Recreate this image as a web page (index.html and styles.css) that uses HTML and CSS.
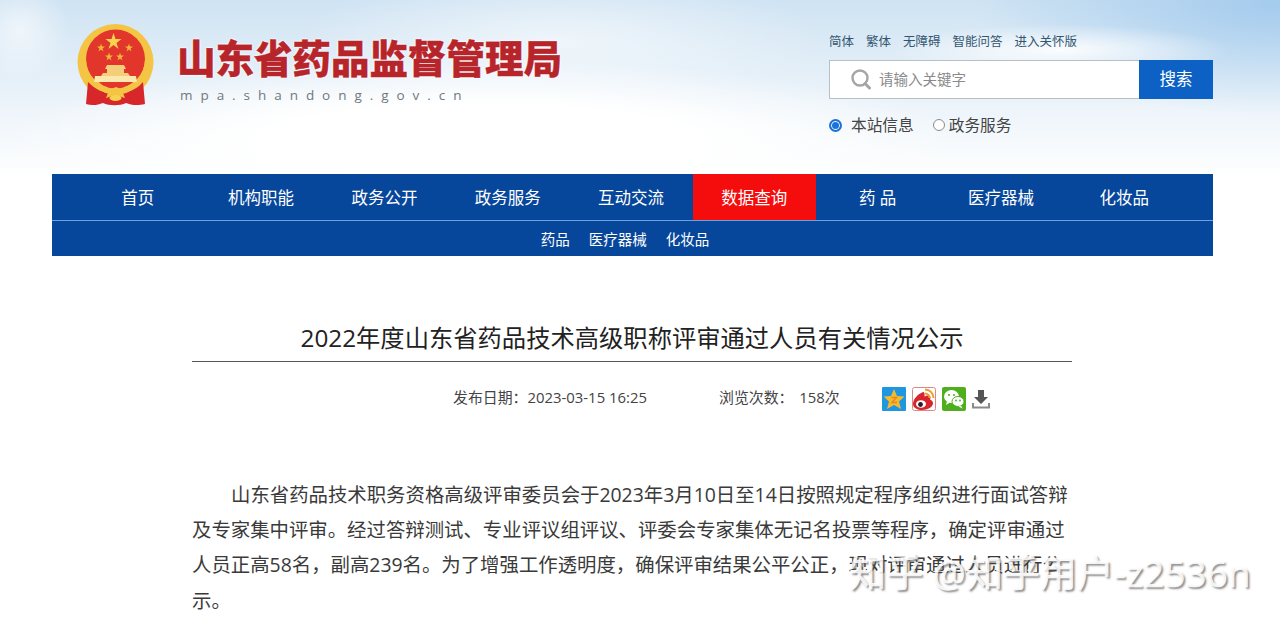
FILE: index.html
```html
<!DOCTYPE html>
<html lang="zh-CN">
<head>
    <meta charset="UTF-8">
    <title>2022年度山东省药品技术高级职称评审通过人员有关情况公示</title>
    <link rel="stylesheet" href="styles.css">
</head>
<body>
    <div class="topDiv">
        <div class="logoBox">
            <svg class="emblem" width="78" height="84" viewBox="0 0 78 84">
                <circle cx="38.500" cy="38" r="38" fill="#f4c445"/>
                <circle cx="38.500" cy="35" r="29.500" fill="#e2352b"/>
                <path fill="#f4c445" d="M9 36c1 16 10 24 21 27l-3 5C14 64 4 52 3 38z"/>
                <path fill="#f4c445" d="M68 36c-1 16-10 24-21 27l3 5c13-4 23-16 24-30z"/>
                <polygon fill="#f8d24e" points="36.500,9 38.500,15 44.500,15 39.500,19 41.500,25 36.500,21 31.500,25 33.500,19 28.500,15 34.500,15"/>
                <polygon fill="#f0b93a" points="24,19.500 25,22.500 28,22.500 25.500,24.500 26.500,27.500 24,25.500 21.500,27.500 22.500,24.500 20,22.500 23,22.500"/>
                <polygon fill="#f0b93a" points="52,19.500 53,22.500 56,22.500 53.500,24.500 54.500,27.500 52,25.500 49.500,27.500 50.500,24.500 48,22.500 51,22.500"/>
                <polygon fill="#f0b93a" points="32,28.500 33,31.500 36,31.500 33.500,33.500 34.500,36.500 32,34.500 29.500,36.500 30.500,33.500 28,31.500 31,31.500"/>
                <polygon fill="#f0b93a" points="43,28.500 44,31.500 47,31.500 44.500,33.500 45.500,36.500 43,34.500 40.500,36.500 41.500,33.500 39,31.500 42,31.500"/>
                <path fill="#f3cf7a" d="M30 41h17l2 4h-2v4h4l2 3H24l2-3h4v-4h-2z"/>
                <path fill="#fae8ad" d="M18 52h41l1 6H17z"/>
                <path fill="#d8272b" d="M11 58c5 5 12 10 20 11l-2 5 9-3 10 3-2-5c8-1 16-6 20-11l2 22c-8 2-14 1-19-1-6 3-17 3-23 0-5 2-11 3-17 1z"/>
                <path fill="#f4c445" d="M16 58h6c3 4 8 6 12 7l5-2 5 2c4-1 9-3 12-7h6c-5 7-10 11-17 12l-6 3-6-3c-7-1-12-5-17-12z"/>
                <ellipse cx="38.500" cy="74" rx="6" ry="3" fill="#f8d24e"/>
            </svg>
            <div class="logoText">
                <h1 class="siteName">山东省药品监督管理局</h1>
                <p class="siteUrl">mpa.shandong.gov.cn</p>
            </div>
        </div>
        <div class="searchBox">
            <div class="topLinks">
                <span>简体</span><span>繁体</span><span>无障碍</span><span>智能问答</span><span>进入关怀版</span>
            </div>
            <div class="searchRow">
                <div class="searchInput">
                    <svg width="22" height="22" viewBox="0 0 22 22">
                        <circle cx="10" cy="10" r="7.500" fill="none" stroke="#a5a5a5" stroke-width="2.400"/>
                        <path d="M15 15.500l4.500 4.500" stroke="#a5a5a5" stroke-width="3" stroke-linecap="round"/>
                    </svg>
                    <span>请输入关键字</span>
                </div>
                <div class="searchButton">搜索</div>
            </div>
            <div class="radioRow">
                <span class="radioDot checked"></span><span class="radioText">本站信息</span>
                <span class="radioDot"></span><span>政务服务</span>
            </div>
        </div>
    </div>

    <div class="navBox">
        <div class="navMain">
            <p>首页</p>
            <p>机构职能</p>
            <p>政务公开</p>
            <p>政务服务</p>
            <p>互动交流</p>
            <p class="navActive">数据查询</p>
            <p>药 品</p>
            <p>医疗器械</p>
            <p>化妆品</p>
        </div>
        <div class="navSub">
            <p>药品</p>
            <p>医疗器械</p>
            <p>化妆品</p>
        </div>
    </div>

    <div class="mainContainer">
        <h2 class="postTitle">2022年度山东省药品技术高级职称评审通过人员有关情况公示</h2>
        <div class="postInfo">
            <span class="postDate">发布日期：2023-03-15 16:25</span>
            <span class="postViews">浏览次数： 158次</span>
            <div class="shareIcons">
                <svg width="24" height="24" viewBox="0 0 24 24">
                    <rect width="24" height="24" rx="1" fill="#1f96e0"/>
                    <polygon fill="#f5b92e" points="12,2 15,9 22.500,9.500 17,14.500 19,22 12,18 5,22 7,14.500 1.500,9.500 9,9"/>
                    <path d="M9.500 10.500h5l-4.500 5h5" fill="none" stroke="#e58a1f" stroke-width="1.500"/>
                </svg>
                <svg width="24" height="24" viewBox="0 0 24 24">
                    <rect x=".5" y=".5" width="23" height="23" rx="2" fill="#fff" stroke="#d98a80"/>
                    <path fill="#d8242c" d="M11 5C6 7 1 12 1 17c0 4 5 6 9 6 6 0 11-3 11-7 0-2-2-3-3-3.500 1-2 .5-4-2-4-1.500 0-2.500 .5-3.500 1 .5-3-.5-5-1.500-4.500z"/>
                    <ellipse cx="9" cy="17" rx="5" ry="3.800" fill="#fff"/>
                    <circle cx="8.500" cy="17.500" r="2.400" fill="#222"/>
                    <path d="M13 2.500c4.500 0 8.500 3.500 8.500 8.500M13 6.500c2.500 0 4.500 2 4.500 4.500" fill="none" stroke="#f09a2a" stroke-width="2"/>
                </svg>
                <svg width="24" height="24" viewBox="0 0 24 24">
                    <rect width="24" height="24" rx="2" fill="#4fae1e"/>
                    <ellipse cx="9.500" cy="9.500" rx="7.500" ry="6.500" fill="#fff"/>
                    <path d="M5 14l-1 4 4-2.500z" fill="#fff"/>
                    <ellipse cx="16" cy="14.500" rx="6" ry="5" fill="#fff" stroke="#4fae1e"/>
                    <path d="M19 18.500l1.500 3-4-2z" fill="#fff"/>
                    <circle cx="7" cy="8" r="1" fill="#4fae1e"/>
                    <circle cx="12" cy="8" r="1" fill="#4fae1e"/>
                    <circle cx="14" cy="13.500" r=".9" fill="#4fae1e"/>
                    <circle cx="18" cy="13.500" r=".9" fill="#4fae1e"/>
                </svg>
                <svg width="18" height="20" viewBox="0 0 18 20">
                    <path fill="#555" d="M6 1h6v7h4l-7 7-7-7h4z"/>
                    <path d="M1 14v4.500h16V14" fill="none" stroke="#8a8a8a" stroke-width="2"/>
                </svg>
            </div>
        </div>
        <p class="postText">山东省药品技术职务资格高级评审委员会于2023年3月10日至14日按照规定程序组织进行面试答辩及专家集中评审。经过答辩测试、专业评议组评议、评委会专家集体无记名投票等程序，确定评审通过人员正高58名，副高239名。为了增强工作透明度，确保评审结果公平公正，现对评审通过人员进行公示。</p>
    </div>

    <div class="waterMark">知乎 @知乎用户-z2536n</div>
</body>
</html>
```

FILE: styles.css
```css
html, body {
    padding: 0;
    margin: 0;
    height: 628px;
    overflow: hidden;
}

body {
    position: relative;
    background-color: #fff;
    color: #333;
    font-family: "Open Sans", "Noto Sans CJK SC", sans-serif;
}

h1, h2, p {
    margin: 0;
}

/* sky picture, rebuilt from soft gradients */
.topDiv {
    height: 174px;
    display: flex;
    justify-content: space-between;
    box-sizing: border-box;
    padding: 24px 67px 0 77px;
    background-color: #fff;
    background-image:
        radial-gradient(ellipse 480px 80px at 480px 140px, #fff 45%, rgba(255,255,255,0)),
        radial-gradient(ellipse 170px 26px at 1060px 50px, rgba(255,255,255,.9), rgba(255,255,255,0)),
        radial-gradient(ellipse 50px 50px at 20px 30px, rgba(255,255,255,.6), rgba(255,255,255,0)),
        radial-gradient(ellipse 260px 70px at 560px 40px, rgba(255,255,255,.55), rgba(255,255,255,0)),
        radial-gradient(ellipse 300px 110px at 1275px 5px, rgba(150,195,235,.75), rgba(150,195,235,0)),
        linear-gradient(#cfe3f3 0, #e0edf7 60px, #f0f6fb 120px, #fdfefe 172px);
}

.logoBox {
    display: flex;
}

.logoText {
    margin-left: 22px;
    padding-top: 9px;
}

.siteName {
    font-family: "Noto Sans CJK SC", sans-serif;
    font-size: 38.500px;
    line-height: 46px;
    font-weight: 900;
    color: #b7252b;
    white-space: nowrap;
    -webkit-text-stroke: .4px #b7252b;
    text-shadow: 0 0 2px #fff, 0 0 2px #fff, 0 0 3px #fff;
}

.siteUrl {
    margin-top: 7px;
    margin-left: 3px;
    font-size: 13.500px;
    line-height: 18px;
    letter-spacing: 7.950px;
    color: #70787e;
}

.searchBox {
    width: 384px;
}

.topLinks {
    display: flex;
    gap: 12px;
    margin-top: 8px;
    font-size: 12.500px;
    line-height: 19px;
    color: #33566f;
}

.searchRow {
    display: flex;
    height: 39px;
    margin-top: 9px;
}

.searchInput {
    flex: 1;
    display: flex;
    align-items: center;
    gap: 7px;
    padding-left: 20px;
    padding-bottom: 2px;
    background-color: #fff;
    border: 1px solid #b5c0c8;
    border-right: 0;
    font-size: 14.500px;
    color: #8a8a8a;
}

.searchButton {
    width: 74px;
    line-height: 38px;
    text-align: center;
    background-color: #0d61c4;
    color: #fff;
    font-size: 16.500px;
}

.radioRow {
    display: flex;
    align-items: center;
    margin-top: 15px;
    font-size: 15.700px;
    line-height: 22px;
    color: #444;
}

.radioDot {
    width: 10px;
    height: 10px;
    margin-right: 4px;
    border: 1px solid #8b8b8b;
    border-radius: 50%;
    background-color: #fff;
}

.radioDot.checked {
    box-sizing: border-box;
    width: 13px;
    height: 13px;
    margin-left: 0;
    margin-right: 9px;
    border: 2px solid #1a73d8;
    box-shadow: inset 0 0 0 1px #fff;
    background-color: #1a73d8;
}

.radioText {
    margin-right: 19px;
}

.navBox {
    width: 1161px;
    margin-left: 52px;
    background-color: #07479b;
    color: #fff;
}

.navMain {
    display: flex;
    justify-content: center;
    height: 46px;
    padding-right: 3px;
    border-bottom: 1px solid #6ea2dc;
}

.navMain p {
    width: 123.300px;
    line-height: 47px;
    text-align: center;
    font-size: 16.500px;
}

.navMain .navActive {
    background-color: #f50c0c;
}

.navSub {
    display: flex;
    justify-content: center;
    gap: 19px;
    height: 35px;
    padding-right: 15px;
    line-height: 37px;
    font-size: 14.500px;
}

.mainContainer {
    width: 880px;
    margin-left: 192px;
}

.postTitle {
    margin-top: 64px;
    padding-bottom: 5px;
    border-bottom: 1px solid #555;
    text-align: center;
    font-size: 24.300px;
    line-height: 36px;
    font-weight: 400;
    color: #222;
}

.postInfo {
    display: flex;
    height: 24px;
    margin-top: 25px;
    padding-left: 261px;
    font-size: 14.900px;
    line-height: 20px;
    color: #444;
}

.postViews {
    margin-left: 72px;
    word-spacing: 2px;
}

.shareIcons {
    display: flex;
    align-items: center;
    gap: 6px;
    margin-left: 42px;
}

.postText {
    margin-top: 66px;
    font-size: 19.400px;
    line-height: 35.200px;
    text-indent: 39px;
    color: #3a3a3a;
}

.waterMark {
    position: absolute;
    left: 849px;
    top: 546px;
    font-size: 37px;
    line-height: 54px;
    white-space: nowrap;
    color: rgba(255, 255, 255, .85);
    -webkit-text-stroke: .6px rgba(255, 255, 255, .9);
    text-shadow: 2px 2px 2px rgba(90, 90, 90, .7);
}
```
